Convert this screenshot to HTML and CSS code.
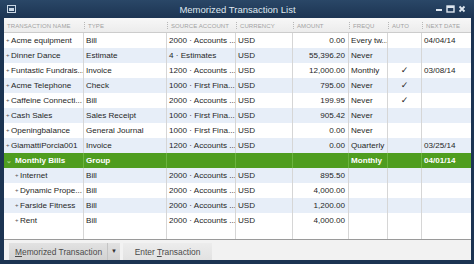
FILE: index.html
```html
<!DOCTYPE html>
<html>
<head>
<meta charset="utf-8">
<link rel="stylesheet" href="styles.css">
</head>
<body>
<div class="window">
  <div class="titlebar">
    <svg class="appicon" width="9" height="8" viewBox="0 0 9 8"><rect x="0.5" y="0.5" width="8" height="7" fill="none" stroke="#c9d6e4" stroke-width="1"/><rect x="2" y="3" width="5" height="3" fill="#c9d6e4"/></svg>
    <div class="title">Memorized Transaction List</div>
    <div class="controls">
      <svg width="8" height="8" viewBox="0 0 8 8"><rect x="1" y="4" width="6" height="2" fill="#dde6ef"/></svg>
      <svg width="9" height="8" viewBox="0 0 9 8"><rect x="1" y="1" width="7" height="6" fill="none" stroke="#dde6ef" stroke-width="1.4"/><rect x="1" y="1" width="7" height="2" fill="#dde6ef"/></svg>
      <svg width="8" height="8" viewBox="0 0 8 8"><path d="M1.5 1.5 L6.5 6.5 M6.5 1.5 L1.5 6.5" stroke="#dde6ef" stroke-width="1.8"/></svg>
    </div>
  </div>
  <div class="content">
    <div class="row head">
      <div class="c first">TRANSACTION NAME</div>
      <div class="c">TYPE</div>
      <div class="c">SOURCE ACCOUNT</div>
      <div class="c">CURRENCY</div>
      <div class="c">AMOUNT</div>
      <div class="c">FREQU</div>
      <div class="c">AUTO</div>
      <div class="c">NEXT DATE</div>
    </div>
    <div class="row">
      <div class="c name"><span class="b">+</span>Acme equipment</div><div class="c">Bill</div><div class="c">2000 · Accounts ...</div><div class="c">USD</div><div class="c num">0.00</div><div class="c">Every tw...</div><div class="c chk"></div><div class="c">04/04/14</div>
    </div>
    <div class="row alt">
      <div class="c name"><span class="b">+</span>Dinner Dance</div><div class="c">Estimate</div><div class="c">4 · Estimates</div><div class="c">USD</div><div class="c num">55,396.20</div><div class="c">Never</div><div class="c chk"></div><div class="c"></div>
    </div>
    <div class="row">
      <div class="c name"><span class="b">+</span>Funtastic Fundrais...</div><div class="c">Invoice</div><div class="c">1200 · Accounts ...</div><div class="c">USD</div><div class="c num">12,000.00</div><div class="c">Monthly</div><div class="c chk">✓</div><div class="c">03/08/14</div>
    </div>
    <div class="row alt">
      <div class="c name"><span class="b">+</span>Acme Telephone</div><div class="c">Check</div><div class="c">1000 · First Fina...</div><div class="c">USD</div><div class="c num">795.00</div><div class="c">Never</div><div class="c chk">✓</div><div class="c"></div>
    </div>
    <div class="row">
      <div class="c name"><span class="b">+</span>Caffeine Connecti...</div><div class="c">Bill</div><div class="c">2000 · Accounts ...</div><div class="c">USD</div><div class="c num">199.95</div><div class="c">Never</div><div class="c chk">✓</div><div class="c"></div>
    </div>
    <div class="row alt">
      <div class="c name"><span class="b">+</span>Cash Sales</div><div class="c">Sales Receipt</div><div class="c">1000 · First Fina...</div><div class="c">USD</div><div class="c num">905.42</div><div class="c">Never</div><div class="c chk"></div><div class="c"></div>
    </div>
    <div class="row">
      <div class="c name"><span class="b">+</span>Openingbalance</div><div class="c">General Journal</div><div class="c">1000 · First Fina...</div><div class="c">USD</div><div class="c num">0.00</div><div class="c">Never</div><div class="c chk"></div><div class="c"></div>
    </div>
    <div class="row alt">
      <div class="c name"><span class="b">+</span>GiamattiPorcia001</div><div class="c">Invoice</div><div class="c">1200 · Accounts ...</div><div class="c">USD</div><div class="c num">0.00</div><div class="c">Quarterly</div><div class="c chk"></div><div class="c">03/25/14</div>
    </div>
    <div class="row group">
      <div class="c name"><span class="gb">⌄</span>Monthly Bills</div><div class="c">Group</div><div class="c"></div><div class="c"></div><div class="c"></div><div class="c">Monthly</div><div class="c"></div><div class="c">04/01/14</div>
    </div>
    <div class="row alt">
      <div class="c name sub"><span class="b">+</span>Internet</div><div class="c">Bill</div><div class="c">2000 · Accounts ...</div><div class="c">USD</div><div class="c num">895.50</div><div class="c"></div><div class="c"></div><div class="c"></div>
    </div>
    <div class="row">
      <div class="c name sub"><span class="b">+</span>Dynamic Prope...</div><div class="c">Bill</div><div class="c">2000 · Accounts ...</div><div class="c">USD</div><div class="c num">4,000.00</div><div class="c"></div><div class="c"></div><div class="c"></div>
    </div>
    <div class="row alt">
      <div class="c name sub"><span class="b">+</span>Farside Fitness</div><div class="c">Bill</div><div class="c">2000 · Accounts ...</div><div class="c">USD</div><div class="c num">1,200.00</div><div class="c"></div><div class="c"></div><div class="c"></div>
    </div>
    <div class="row">
      <div class="c name sub"><span class="b">+</span>Rent</div><div class="c">Bill</div><div class="c">2000 · Accounts ...</div><div class="c">USD</div><div class="c num">4,000.00</div><div class="c"></div><div class="c"></div><div class="c"></div>
    </div>
    <div class="row filler">
      <div class="c"></div><div class="c"></div><div class="c"></div><div class="c"></div><div class="c"></div><div class="c"></div><div class="c"></div><div class="c"></div>
    </div>
  </div>
  <div class="bottombar">
    <div class="btn split"><span class="lbl"><u>M</u>emorized Transaction</span><span class="arrow">▼</span></div>
    <div class="btn plain"><span>Enter <u>T</u>ransaction</span></div>
  </div>
</div>
</body>
</html>
```
FILE: styles.css
```css
html, body {
  margin: 0;
  padding: 0;
  background: #1c3450;
}
.window {
  width: 474px;
  height: 264px;
  display: flex;
  flex-direction: column;
  background: linear-gradient(#2a4767, #1c3452 18px, #1c3452);
  font-family: "Liberation Sans", Arial, sans-serif;
  box-sizing: border-box;
  padding: 0 3px 4px 4px;
}
.titlebar {
  height: 18px;
  flex: none;
  display: flex;
  align-items: center;
  position: relative;
}
.appicon {
  margin-left: 3px;
}
.title {
  position: absolute;
  left: 0;
  right: 0;
  text-align: center;
  color: #dfe7ef;
  font-size: 9.5px;
  top: 4px;
}
.controls {
  margin-left: auto;
  display: flex;
  gap: 3px;
  margin-right: 5px;
  align-items: center;
}
.content {
  flex: 1;
  display: flex;
  flex-direction: column;
  background: #ffffff;
  border-bottom: 1px solid #9a9a9a;
}
.row {
  display: grid;
  grid-template-columns: 80px 83px 69px 57px 56px 39px 34px 49px;
  height: 15px;
  flex: none;
  font-size: 8.1px;
  color: #262626;
  background: #ffffff;
}
.row.alt {
  background: #e7eef8;
}
.c {
  border-right: 1px solid #d6d6d6;
  padding-left: 2px;
  white-space: nowrap;
  overflow: hidden;
  line-height: 15px;
}
.c:last-child {
  border-right: none;
}
.num {
  text-align: right;
  padding-left: 0;
  padding-right: 3px;
}
.chk {
  text-align: center;
  padding-left: 0;
  font-family: "DejaVu Sans", sans-serif;
  font-size: 9px;
}
.name {
  padding-left: 2px;
}
.name.sub {
  padding-left: 11px;
}
.b {
  font-size: 6px;
  color: #555;
  margin-right: 1.5px;
  display: inline-block;
  vertical-align: top;
}
.gb {
  font-size: 7px;
  color: #a6d486;
  margin-right: 3px;
  vertical-align: top;
}
.head {
  height: 15px;
  background: linear-gradient(#f7f7f7, #ececec);
  border-bottom: 1px solid #cccccc;
  box-sizing: border-box;
  font-size: 6px;
  color: #a2a2a2;
  letter-spacing: 0.1px;
}
.head .c {
  border-right: none;
  border-left: 1px dotted #b8b8b8;
  line-height: 6px;
  margin: 4px 0 3px 0;
  padding-left: 3px;
  padding-top: 1px;
}
.head .c.first {
  border-left: none;
}
.group {
  background: #4f9d1f;
  color: #ffffff;
  font-weight: bold;
}
.group .c {
  border-right-color: #6cb43f;
}
.filler {
  flex: 1;
  height: auto;
}
.bottombar {
  height: 20px;
  flex: none;
  background: #f2f2f2;
  display: flex;
  align-items: flex-end;
  padding-left: 5px;
  gap: 3px;
}
.btn {
  height: 17px;
  display: flex;
  align-items: center;
  font-size: 8.4px;
  color: #4a4a4a;
  box-sizing: border-box;
}
.btn u {
  text-decoration: underline;
}
.split {
  background: linear-gradient(#e2e2e2, #d2d2d2);
  width: 111px;
  padding-left: 6px;
}
.split .lbl {
  flex: 1;
}
.split .arrow {
  font-size: 6px;
  color: #333;
  border-left: 1px solid #c4c4c4;
  width: 12px;
  text-align: center;
  line-height: 17px;
}
.plain {
  background: linear-gradient(#ececec, #e2e2e2);
  width: 89px;
  justify-content: center;
}
```
